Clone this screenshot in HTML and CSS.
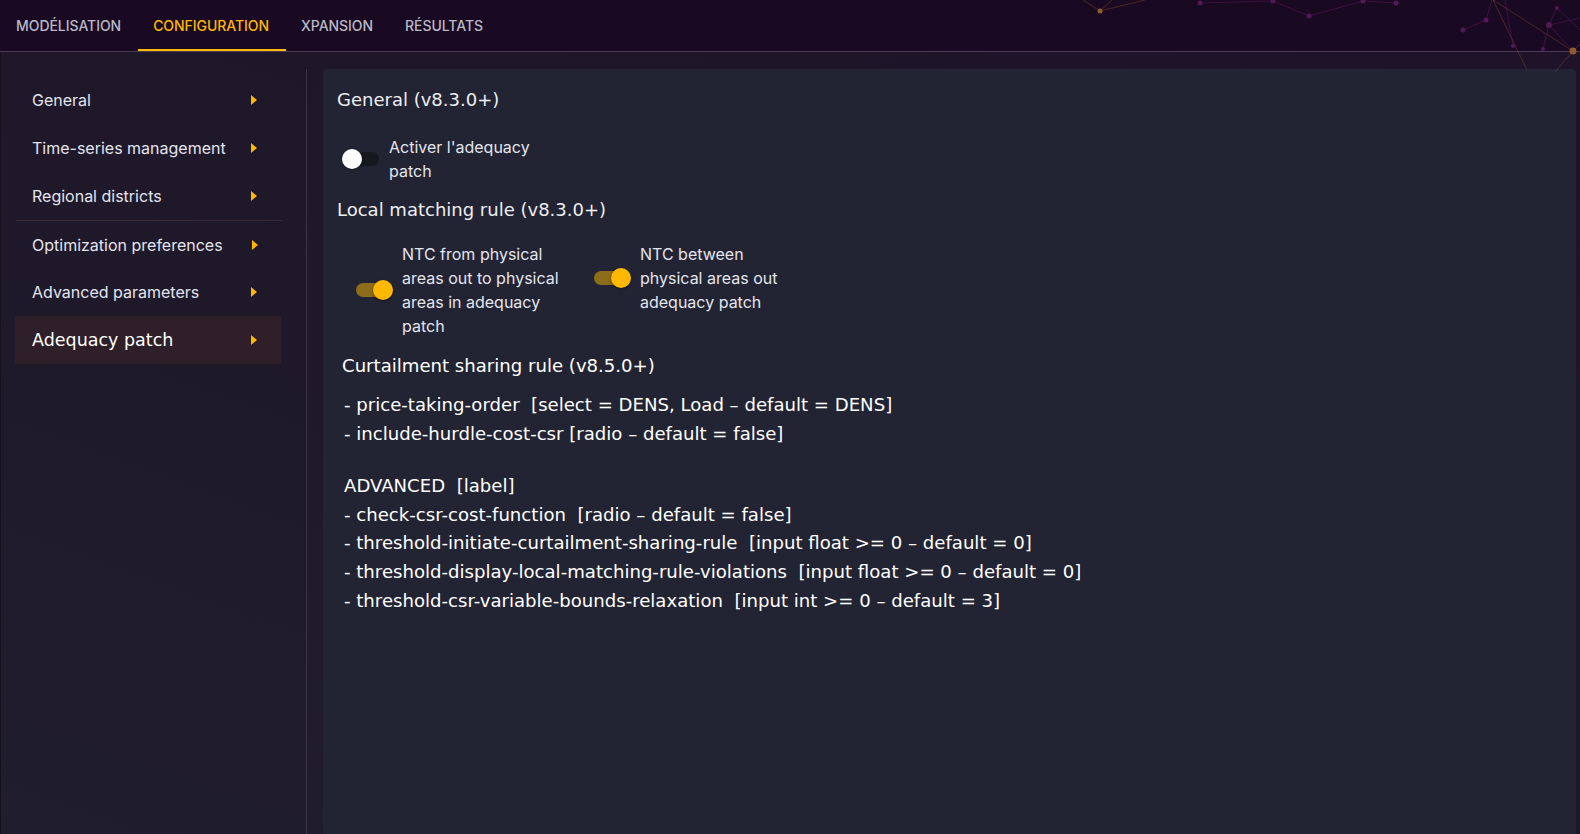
FILE: index.html
```html
<!DOCTYPE html>
<html lang="fr">
<head>
<meta charset="utf-8">
<title>Configuration - Adequacy patch</title>
<link rel="stylesheet" href="styles.css">
</head>
<body>
<header class="topbar">
  <nav class="tabs">
    <div class="tab">MODÉLISATION</div>
    <div class="tab active">CONFIGURATION</div>
    <div class="tab">XPANSION</div>
    <div class="tab">RÉSULTATS</div>
  </nav>
  <svg class="network" viewBox="1000 0 580 90" width="580" height="90" aria-hidden="true">
    <g stroke="rgba(190,120,60,0.28)" stroke-width="1" fill="none">
      <line x1="1083" y1="0" x2="1100" y2="11"/>
      <line x1="1112" y1="0" x2="1100" y2="11"/>
      <line x1="1100" y1="11" x2="1145" y2="0"/>
      <line x1="1493" y1="0" x2="1573" y2="51"/>
      <line x1="1493" y1="0" x2="1527" y2="70"/>
      <line x1="1573" y1="51" x2="1555" y2="72"/>
      <line x1="1573" y1="51" x2="1580" y2="44"/>
    </g>
    <g stroke="rgba(150,40,150,0.28)" stroke-width="1" fill="none">
      <line x1="1200" y1="3" x2="1273" y2="1"/>
      <line x1="1273" y1="1" x2="1309" y2="16"/>
      <line x1="1309" y1="16" x2="1363" y2="1"/>
      <line x1="1363" y1="1" x2="1400" y2="3"/>
      <line x1="1463" y1="30" x2="1486" y2="20"/>
      <line x1="1486" y1="20" x2="1492" y2="0"/>
      <line x1="1549" y1="25" x2="1557" y2="8"/>
      <line x1="1549" y1="25" x2="1573" y2="51"/>
      <line x1="1557" y1="8" x2="1580" y2="30"/>
      <line x1="1543" y1="49" x2="1549" y2="25"/>
      <line x1="1513" y1="46" x2="1505" y2="0"/>
      <line x1="1549" y1="25" x2="1580" y2="18"/>
    </g>
    <g fill="#521a55">
      <circle cx="1200" cy="3" r="2.5"/>
      <circle cx="1273" cy="1" r="2.5"/>
      <circle cx="1309" cy="16" r="2.5"/>
      <circle cx="1363" cy="1" r="2.5"/>
      <circle cx="1396" cy="3" r="2.5"/>
      <circle cx="1463" cy="30" r="2.5"/>
      <circle cx="1486" cy="20" r="2.5"/>
      <circle cx="1513" cy="46" r="2"/>
      <circle cx="1543" cy="49" r="2"/>
      <circle cx="1549" cy="25" r="3"/>
      <circle cx="1557" cy="8" r="2"/>
    </g>
    <g fill="#8e5c2e">
      <circle cx="1100" cy="11" r="2.5"/>
      <circle cx="1573" cy="51" r="3.5"/>
    </g>
  </svg>
</header>

<main class="main">
  <aside class="sidebar">
    <ul class="menu">
      <li class="menu-item"><span class="menu-label">General</span><span class="arrow"></span></li>
      <li class="menu-item"><span class="menu-label">Time-series management</span><span class="arrow"></span></li>
      <li class="menu-item"><span class="menu-label">Regional districts</span><span class="arrow"></span></li>
      <li class="menu-item divided"><span class="menu-label">Optimization preferences</span><span class="arrow"></span></li>
      <li class="menu-item"><span class="menu-label">Advanced parameters</span><span class="arrow"></span></li>
      <li class="menu-item selected"><span class="menu-label">Adequacy patch</span><span class="arrow"></span></li>
    </ul>
  </aside>

  <section class="panel">
    <h2 class="heading">General (v8.3.0+)</h2>

    <div class="row row-general">
      <label class="control">
        <span class="switch"><span class="track"></span><span class="thumb"></span></span>
        <span class="control-label">Activer l'adequacy patch</span>
      </label>
    </div>

    <h2 class="heading heading-local">Local matching rule (v8.3.0+)</h2>

    <div class="row row-local">
      <label class="control">
        <span class="switch on"><span class="track"></span><span class="thumb"></span></span>
        <span class="control-label">NTC from physical areas out to physical areas in adequacy patch</span>
      </label>
      <label class="control">
        <span class="switch on"><span class="track"></span><span class="thumb"></span></span>
        <span class="control-label">NTC between physical areas out adequacy patch</span>
      </label>
    </div>

    <div class="notes">
      <p class="notes-title">Curtailment sharing rule (v8.5.0+)</p>
      <p class="notes-line first">- price-taking-order&nbsp; [select = DENS, Load – default = DENS]</p>
      <p class="notes-line">- include-hurdle-cost-csr [radio – default = false]</p>
      <p class="notes-line spaced">ADVANCED&nbsp; [label]</p>
      <p class="notes-line">- check-csr-cost-function&nbsp; [radio – default = false]</p>
      <p class="notes-line">- threshold-initiate-curtailment-sharing-rule&nbsp; [input float &gt;= 0 – default = 0]</p>
      <p class="notes-line">- threshold-display-local-matching-rule-violations&nbsp; [input float &gt;= 0 – default = 0]</p>
      <p class="notes-line">- threshold-csr-variable-bounds-relaxation&nbsp; [input int &gt;= 0 – default = 3]</p>
    </div>
  </section>
</main>
</body>
</html>
```

FILE: styles.css
```css
* {
  box-sizing: border-box;
}

html, body {
  margin: 0;
  padding: 0;
  height: 100%;
}

body {
  background: #1e1729;
  font-family: Inter, "Noto Sans", sans-serif;
  color: #e6e6ee;
  overflow: hidden;
}

/* ---------- top bar ---------- */
.topbar {
  position: relative;
  height: 52px;
  background: #1a0922;
  border-bottom: 1px solid #4a3b52;
}

.tabs {
  display: flex;
  height: 51px;
}

.tab {
  position: relative;
  display: flex;
  align-items: center;
  padding: 0 16px;
  height: 51px;
  font-family: Inter, sans-serif;
  font-size: 14px;
  font-weight: 500;
  letter-spacing: -0.05px;
  color: #b9b9c6;
}

.tab.active {
  color: #ffb800;
}

.tab.active::after {
  content: "";
  position: absolute;
  left: 1px;
  right: -1px;
  bottom: 0;
  height: 2px;
  background: #ffb800;
}

.network {
  position: absolute;
  top: 0;
  right: 0;
  pointer-events: none;
  overflow: visible;
}

/* ---------- main ---------- */
.main {
  display: flex;
  height: calc(100vh - 52px);
  padding-top: 17px;
  background: linear-gradient(200deg, #1f1229 0%, #1e1729 35%, #1f1b2b 75%, #201d2e 100%);
  border-left: 1px solid #15101c;
}

.sidebar {
  width: 306px;
  flex: 0 0 306px;
  border-right: 1px solid #3b3447;
  padding: 7px 25px 0 14px;
}

.menu {
  list-style: none;
  margin: 0;
  padding: 0;
}

.menu-item {
  display: flex;
  align-items: center;
  justify-content: space-between;
  height: 48px;
  padding: 0 24px 0 17px;
  font-family: Inter, sans-serif;
  font-size: 16px;
  color: #e4e4ee;
}

.menu-item.divided {
  border-top: 1px solid #3a2c36;
  margin-left: 1px;
  margin-right: -1px;
  padding-left: 16px;
}

.menu-item.selected {
  background: #2e1f28;
  font-family: "DejaVu Sans", sans-serif;
  font-size: 17.5px;
  color: #ffffff;
}

.arrow {
  width: 0;
  height: 0;
  border-top: 5px solid transparent;
  border-bottom: 5px solid transparent;
  border-left: 6px solid #ffb800;
}

/* ---------- panel ---------- */
.panel {
  flex: 1;
  margin: 0 4px 0 16px;
  background: #222433;
  border-radius: 4px 4px 0 0;
  padding: 19px 14px 0 14px;
  overflow: hidden;
}

.heading {
  margin: 0;
  font-family: "DejaVu Sans", sans-serif;
  font-weight: normal;
  font-size: 18px;
  line-height: 24px;
  color: #eeeef2;
}

.row {
  display: flex;
  align-items: flex-start;
}

.row-general {
  margin: 23px 0 15px -4px;
}

.row-local {
  margin: 20px 0 0 7px;
}

.control {
  display: flex;
  align-items: center;
}

.row-local .control {
  width: 238px;
}

.control-label {
  font-family: Inter, sans-serif;
  font-size: 16px;
  line-height: 24px;
  color: #e4e4ee;
  max-width: 162px;
}

.row-general .control-label {
  margin-left: -2px;
}

.switch {
  position: relative;
  flex: 0 0 58px;
  width: 58px;
  height: 38px;
}

.track {
  position: absolute;
  left: 12px;
  top: 12px;
  width: 34px;
  height: 14px;
  border-radius: 7px;
  background: #17171f;
}

.thumb {
  position: absolute;
  left: 9px;
  top: 9px;
  width: 20px;
  height: 20px;
  border-radius: 50%;
  background: #ffffff;
  box-shadow: 0 1px 3px rgba(0, 0, 0, 0.4);
}

.switch.on .track {
  background: #8d6c1a;
}

.switch.on .thumb {
  left: 29px;
  background: #ffb800;
}

/* ---------- notes ---------- */
.notes {
  margin: 13px 0 0 5px;
  font-family: "DejaVu Sans", sans-serif;
  font-size: 18.1px;
  line-height: 29px;
  color: #ffffff;
}

.notes p {
  margin: 0;
  white-space: pre;
}

.notes-line {
  padding-left: 2px;
  line-height: 28.75px;
}

.notes-line.first {
  margin-top: 11px;
}

.notes-line.spaced {
  margin-top: 23.25px;
}
```
